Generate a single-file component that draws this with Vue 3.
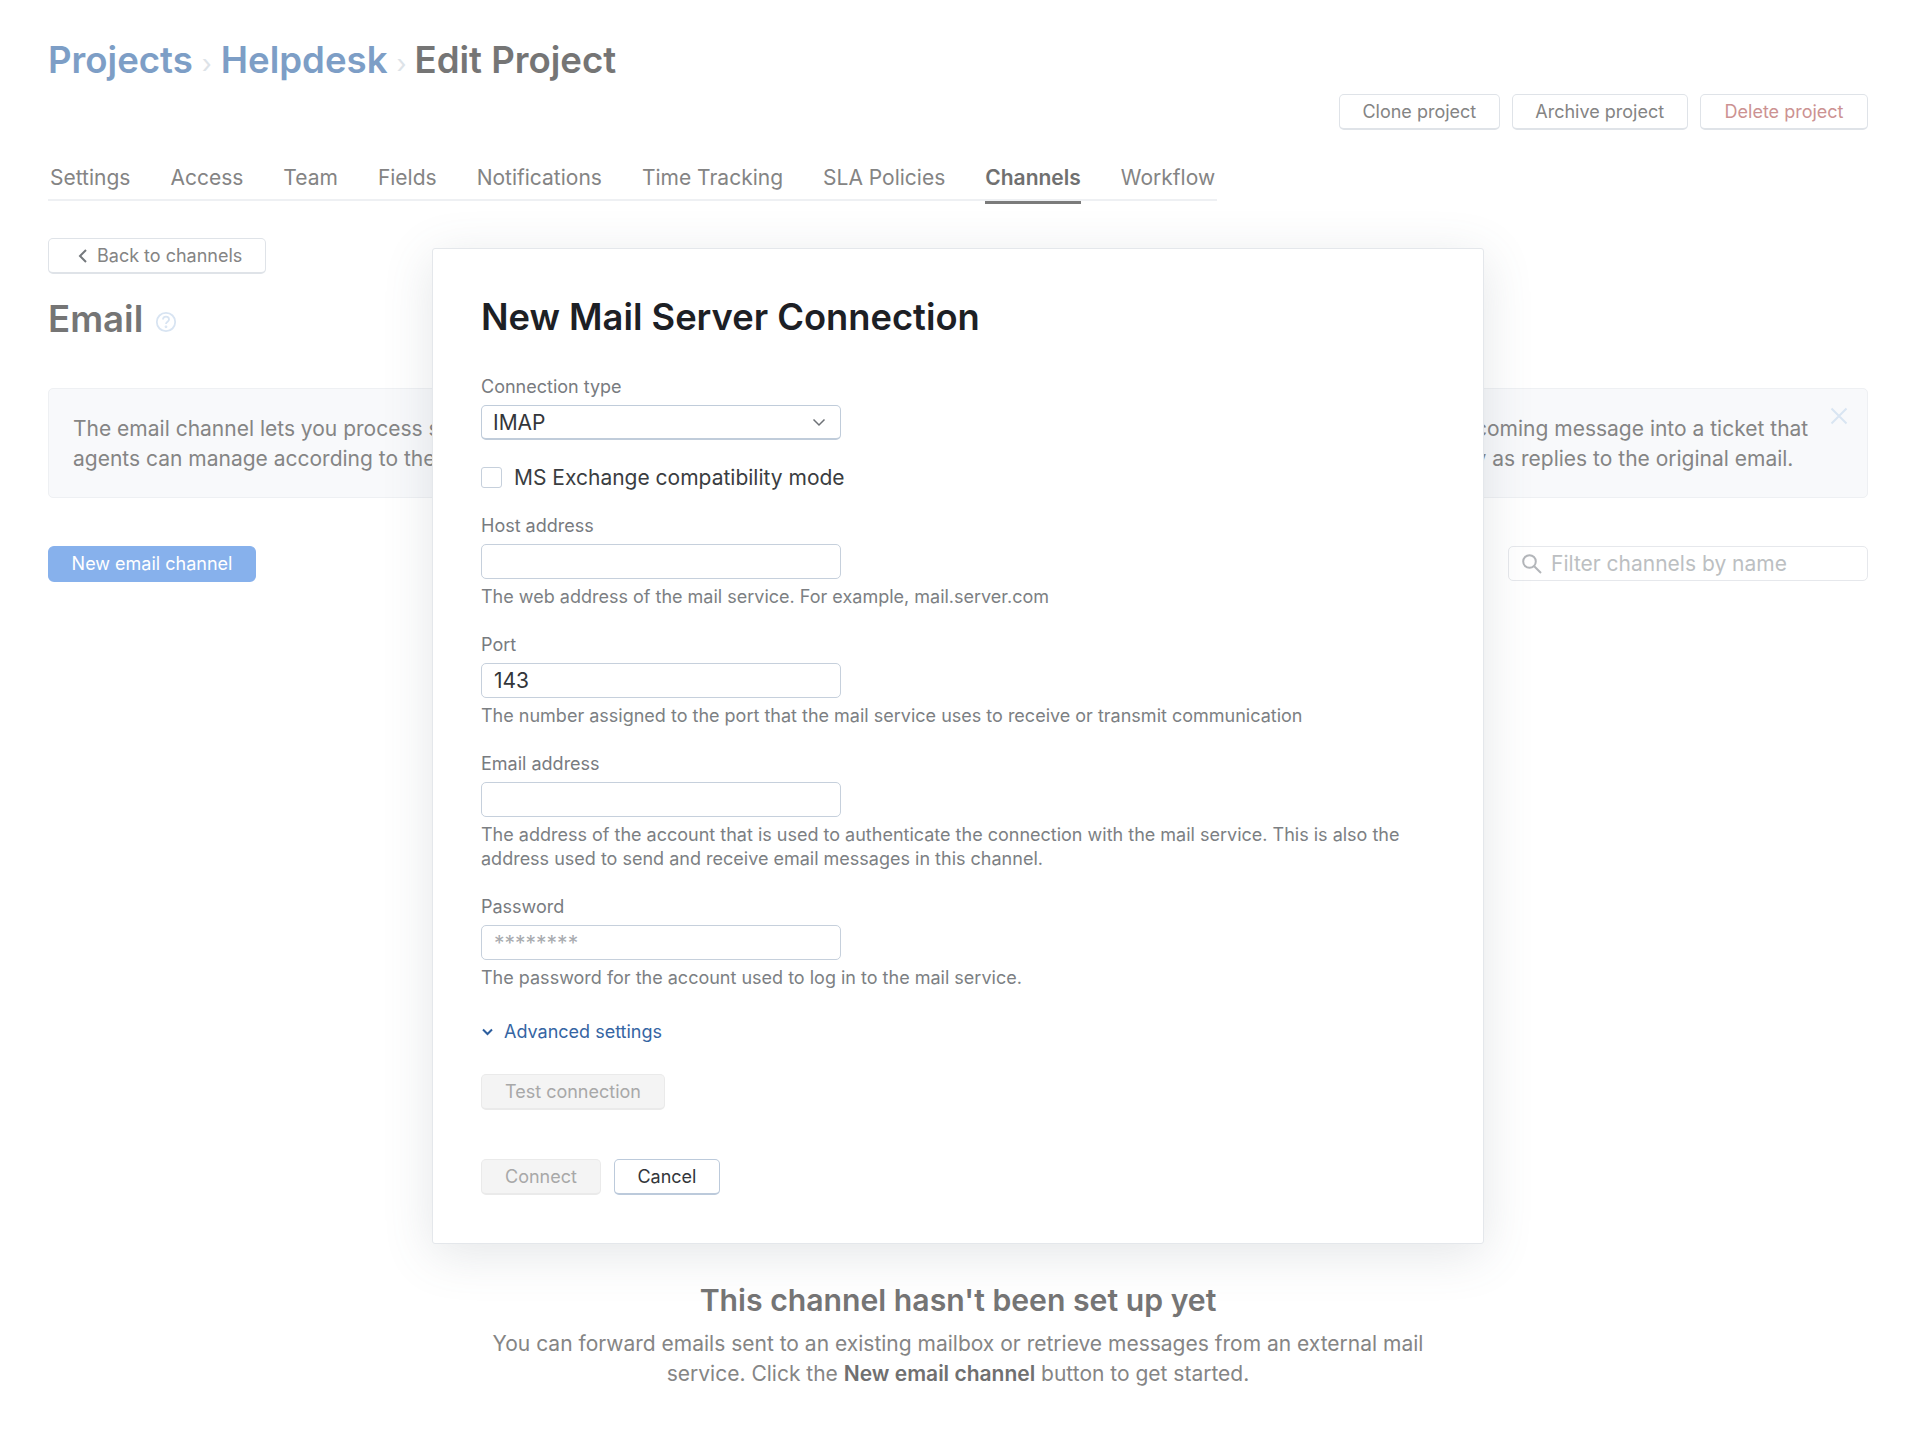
<template>
  <div class="page">
    <header class="top">
      <h1 class="crumbs">
        <span class="crumb-link">Projects</span><span class="sep">›</span><span class="crumb-link">Helpdesk</span><span class="sep">›</span><span class="crumb-current">Edit Project</span>
      </h1>
      <div class="actions">
        <button class="btn">Clone project</button>
        <button class="btn">Archive project</button>
        <button class="btn danger">Delete project</button>
      </div>
    </header>

    <nav class="tabs">
      <span v-for="t in tabs" :key="t" class="tab" :class="{ active: t === 'Channels' }">{{ t }}</span>
    </nav>

    <button class="btn back">
      <svg width="12" height="16" viewBox="0 0 12 16" fill="none" stroke="#74787c" stroke-width="2"><path d="M9 2 L3 8 L9 14" /></svg>
      Back to channels
    </button>

    <h2 class="email-title">
      Email
      <svg class="help" width="22" height="22" viewBox="0 0 22 22" fill="none" stroke="#d8e4f2" stroke-width="1.8">
        <circle cx="11" cy="11" r="9.2" />
        <path d="M8 8.6c0-1.8 1.4-2.9 3-2.9s3 1 3 2.7c0 2.2-3 2.4-3 4.6" />
        <circle cx="11" cy="15.8" r="0.5" />
      </svg>
    </h2>

    <div class="banner">
      <p>The email channel lets you process support requests sent by email directly in Helpdesk. When it has connected, the channel converts each incoming message into a ticket that<br />agents can manage according to the workflow and rules of your project, with all of their responses to customers being sent back automatically as replies to the original email.</p>
      <svg class="close" width="18" height="18" viewBox="0 0 18 18" stroke="#d9e5f2" stroke-width="2"><path d="M1.5 1.5 L16.5 16.5 M16.5 1.5 L1.5 16.5" /></svg>
    </div>

    <div class="toolbar">
      <button class="btn primary">New email channel</button>
      <div class="search">
        <svg width="22" height="22" viewBox="0 0 22 22" fill="none" stroke="#b3b6ba" stroke-width="2"><circle cx="8.5" cy="8.5" r="6.3" /><path d="M13.2 13.2 L20 20" /></svg>
        <span>Filter channels by name</span>
      </div>
    </div>

    <section class="empty">
      <h3>This channel hasn't been set up yet</h3>
      <p>You can forward emails sent to an existing mailbox or retrieve messages from an external mail service. Click the <b>New email channel</b> button to get started.</p>
    </section>

    <div class="modal">
      <h2 class="modal-title">New Mail Server Connection</h2>

      <label class="label first">Connection type</label>
      <div class="field select">
        <span>IMAP</span>
        <svg width="14" height="9" viewBox="0 0 14 9" fill="none" stroke="#6d7176" stroke-width="1.5"><path d="M1.5 1.5 L7 7 L12.5 1.5" /></svg>
      </div>

      <div class="check-row">
        <span class="checkbox"></span>
        <span>MS Exchange compatibility mode</span>
      </div>

      <label class="label host">Host address</label>
      <div class="field"></div>
      <p class="hint">The web address of the mail service. For example, mail.server.com</p>

      <label class="label">Port</label>
      <div class="field value">143</div>
      <p class="hint">The number assigned to the port that the mail service uses to receive or transmit communication</p>

      <label class="label">Email address</label>
      <div class="field"></div>
      <p class="hint">The address of the account that is used to authenticate the connection with the mail service. This is also the address used to send and receive email messages in this channel.</p>

      <label class="label">Password</label>
      <div class="field placeholder">********</div>
      <p class="hint">The password for the account used to log in to the mail service.</p>

      <div class="advanced">
        <svg width="11" height="8" viewBox="0 0 11 8" fill="none" stroke="#2d5e9e" stroke-width="2"><path d="M1 1.5 L5.5 6 L10 1.5" /></svg>
        <span>Advanced settings</span>
      </div>

      <button class="btn disabled test">Test connection</button>

      <div class="footer">
        <button class="btn disabled">Connect</button>
        <button class="btn cancel">Cancel</button>
      </div>
    </div>
  </div>
</template>

<script setup>
const tabs = ['Settings', 'Access', 'Team', 'Fields', 'Notifications', 'Time Tracking', 'SLA Policies', 'Channels', 'Workflow']
</script>

<style>
body { margin: 0; background: #fff; }
</style>

<style scoped>
.page {
  position: relative;
  box-sizing: border-box;
  width: 1913px;
  height: 1448px;
  padding: 36px 45px 0 48px;
  background: #fff;
  color: #7a7a7a;
  font-family: Inter, "Liberation Sans", sans-serif;
  font-size: 18px;
  overflow: hidden;
}
h1, h2, h3, p { margin: 0; }
button { font-family: inherit; }

.top { position: relative; height: 94px; }
.crumbs { font-size: 36.6px; line-height: 48px; font-weight: 600; color: #757575; }
.crumb-link { color: #7d9ec6; }
.crumb-current { margin-left: -1px; }
.sep { display: inline-block; width: 28px; text-align: center; font-size: 26px; font-weight: 400; color: #dde3e8; }
.actions { position: absolute; right: 0; top: 58px; display: flex; gap: 12px; }
.actions .btn { padding: 0 22.5px; }

.btn {
  box-sizing: border-box;
  height: 36px;
  padding: 0 23px;
  background: #fff;
  border: 1px solid #dfe3e8;
  border-bottom-width: 2px;
  border-radius: 5px;
  font-size: 18px;
  color: #848484;
}
.actions .danger { padding: 0 23.5px 0 24px; color: #cc9292; }

.tabs {
  display: flex;
  width: 1169px;
  height: 71px;
  box-sizing: border-box;
  padding: 34px 0 0 2px;
  gap: 40px;
  border-bottom: 2px solid #eef0f3;
}
.tab { height: 37px; font-size: 21px; line-height: 28px; color: #848484; }
.tab.active { font-weight: 600; color: #707070; border-bottom: 3px solid #7b7b7b; }

.back { display: flex; align-items: center; gap: 8px; margin-top: 37px; width: 218px; height: 36px; padding: 0 0 0 28px; }

.email-title { display: flex; align-items: center; gap: 12px; margin-top: 25px; height: 40px; font-size: 36.6px; font-weight: 600; color: #757575; }
.help { margin-top: 6px; }

.banner {
  position: relative;
  box-sizing: border-box;
  height: 110px;
  margin-top: 49px;
  padding: 25px 40px 0 24px;
  background: #f8f9fb;
  border: 1px solid #eef0f3;
  border-radius: 5px;
  font-size: 21px;
  line-height: 30px;
  color: #858585;
}
.close { position: absolute; right: 19px; top: 18px; }

.toolbar { display: flex; justify-content: space-between; margin-top: 48px; }
.primary { width: 208px; padding: 0; background: #87b1ec; border-color: #87b1ec; color: #fff; border-radius: 6px; }
.search {
  box-sizing: border-box;
  display: flex;
  align-items: center;
  gap: 8px;
  width: 360px;
  height: 35px;
  padding-left: 12px;
  border: 1px solid #e6e8ec;
  border-radius: 5px;
  font-size: 21px;
  color: #bcbfc2;
}

.empty { width: 960px; margin: 699px auto 0; text-align: center; font-size: 21px; line-height: 30px; color: #858585; }
.empty h3 { font-size: 30.2px; line-height: 40px; font-weight: 600; color: #757575; margin-bottom: 9px; margin-top: -1px; }
.empty b { font-weight: 600; color: #707070; }

.modal {
  position: absolute;
  left: 432px;
  top: 248px;
  box-sizing: border-box;
  width: 1052px;
  height: 996px;
  padding: 46px 48px 0;
  background: #fff;
  border: 1px solid #e4e7eb;
  border-radius: 3px;
  box-shadow: 0 10px 50px rgba(90, 100, 110, 0.16);
  color: #1f2226;
}
.modal-title { font-size: 36.3px; line-height: 44px; font-weight: 600; color: #1d2025; }

.label { display: block; margin-top: 24px; font-size: 18px; line-height: 24px; color: #787b80; }
.label.first { margin-top: 36px; }
.label.host { margin-top: 25px; }

.field {
  box-sizing: border-box;
  display: flex;
  align-items: center;
  width: 360px;
  height: 35px;
  margin-top: 6px;
  padding: 0 12px;
  background: #fff;
  border: 1px solid #c6d0dc;
  border-radius: 5px;
  font-size: 21px;
}
.select { justify-content: space-between; padding: 0 14px 0 11px; border-width: 1px 1px 2px; border-color: #c0ccda; color: #33363a; }
.value { color: #33363a; }
.placeholder { padding-top: 2px; color: #a8abaf; }

.check-row { display: flex; align-items: center; gap: 12px; margin-top: 25px; height: 24px; font-size: 21px; color: #3a3d41; }
.checkbox { box-sizing: border-box; width: 21px; height: 21px; border: 1px solid #c6d0dc; border-radius: 3px; }

.hint { margin-top: 6px; font-size: 18px; line-height: 24px; color: #7c7f83; }

.advanced { display: flex; align-items: center; gap: 11px; margin-top: 30px; padding-left: 1px; font-size: 18px; line-height: 24px; color: #3565a3; }
.disabled { background: #f4f4f4; border-color: #eaeaea; color: #a8a8a8; }
.test { display: block; margin-top: 30px; height: 36px; }
.footer { display: flex; gap: 13px; margin-top: 49px; }
.cancel { padding: 0 22.5px; color: #33363a; border-color: #bccadb; }
</style>
